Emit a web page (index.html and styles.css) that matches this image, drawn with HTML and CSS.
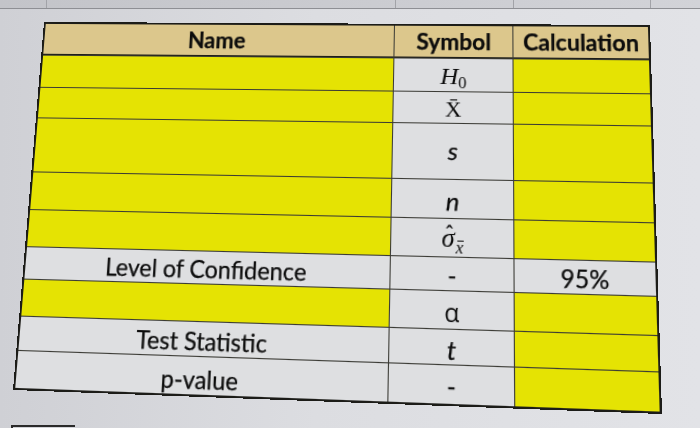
FILE: index.html
```html
<!DOCTYPE html>
<html lang="en">
<head>
<meta charset="utf-8">
<title>Hypothesis test table</title>
<link rel="stylesheet" href="styles.css">
</head>
<body>
<div class="sheet">
  <div class="cell head">Name</div>
  <div class="cell head">Symbol</div>
  <div class="cell head">Calculation</div>

  <div class="cell yellow"></div>
  <div class="cell sym"><span class="serif h0"><i>H</i><sub class="sub0">0</sub></span></div>
  <div class="cell yellow"></div>

  <div class="cell yellow"></div>
  <div class="cell sym"><span class="serif xbar">X&#772;</span></div>
  <div class="cell yellow"></div>

  <div class="cell yellow"></div>
  <div class="cell sym mid"><i class="ital">s</i></div>
  <div class="cell yellow"></div>

  <div class="cell yellow"></div>
  <div class="cell sym"><i class="ital">n</i></div>
  <div class="cell yellow"></div>

  <div class="cell yellow"></div>
  <div class="cell sym"><span class="serif sigma"><span class="hat">σ</span><sub class="subx"><span class="bar">x</span></sub></span></div>
  <div class="cell yellow"></div>

  <div class="cell">Level of Confidence</div>
  <div class="cell sym">-</div>
  <div class="cell">95%</div>

  <div class="cell yellow"></div>
  <div class="cell sym alpha">α</div>
  <div class="cell yellow"></div>

  <div class="cell">Test Statistic</div>
  <div class="cell sym"><i class="ital">t</i></div>
  <div class="cell yellow"></div>

  <div class="cell low">p-value</div>
  <div class="cell sym">-</div>
  <div class="cell yellow"></div>
</div>
</body>
</html>
```
FILE: styles.css
```css
html, body {
  margin: 0;
  padding: 0;
}

body {
  width: 700px;
  height: 428px;
  overflow: hidden;
  font-family: Lato, "Open Sans", "DejaVu Sans", sans-serif;
  color: #0c0c0c;
  background:
    linear-gradient(#2a2a2a, #2a2a2a) 11px 425px / 64px 2px no-repeat,
    linear-gradient(#2a2a2a, #2a2a2a) 11px 425px / 2px 10px no-repeat,
    linear-gradient(#8e8f94, #8e8f94) 0 8px / 100% 1px no-repeat,
    linear-gradient(90deg,
      transparent 46px, #a2a3a8 46px, #a2a3a8 47px, transparent 47px,
      transparent 395px, #a2a3a8 395px, #a2a3a8 396px, transparent 396px,
      transparent 513px, #a2a3a8 513px, #a2a3a8 514px, transparent 514px,
      transparent 650px, #a2a3a8 650px, #a2a3a8 651px, transparent 651px) 0 0 / 100% 8px no-repeat,
    linear-gradient(90deg, #c3c4c9, #d2d3d8) 0 0 / 100% 8px no-repeat,
    linear-gradient(90deg, #cfd0d5 0%, #dcdde1 45%, #e2e3e7 100%);
}

.sheet {
  width: 600px;
  height: 360px;
  box-sizing: border-box;
  display: grid;
  grid-template-columns: 356fr 115fr 129fr;
  grid-template-rows: 33fr 33fr 32fr 55fr 38fr 34fr 31fr 36fr 32fr 36fr;
  gap: 1px;
  background: #3a3a34;
  border: 2px solid #1c1c18;
  transform-origin: 0 0;
  transform: matrix3d(0.955883, 0.0029185, 0, -0.00008326,
                      -0.088469, 0.951447, 0, -0.00018148,
                      0, 0, 1, 0,
                      44, 22, 0, 1);
}

.cell {
  background: #dedfe1;
  display: flex;
  justify-content: center;
  align-items: center;
  padding-top: 5px;
  box-sizing: border-box;
  font-size: 22.5px;
  line-height: 1;
  white-space: nowrap;
  -webkit-text-stroke: 0.25px #0c0c0c;
}

.low {
  padding-top: 8px;
}

.head {
  background: #dcc78c;
  font-weight: 700;
  font-size: 22px;
  padding-top: 2px;
  border-bottom: 1px solid #1c1c18;
}

.yellow {
  background: #e5e303;
}

.sym {
  font-size: 22px;
}

.mid {
  padding-top: 0;
}

.serif {
  font-family: "Liberation Serif", "DejaVu Serif", serif;
  font-size: 24px;
  -webkit-text-stroke: 0;
}

.sub0 {
  font-style: normal;
  font-size: 16px;
  vertical-align: -4px;
}

.xbar {
  font-size: 22px;
}

.sigma {
  font-size: 25px;
}

.hat {
  position: relative;
  display: inline-block;
  font-style: italic;
}

.hat::before {
  content: "\02C6";
  position: absolute;
  left: 4px;
  top: -1px;
  font-size: 20px;
  font-weight: 700;
  font-style: normal;
}

.subx {
  font-size: 16px;
  font-style: italic;
  vertical-align: -6px;
  margin-left: 1px;
}

.bar {
  position: relative;
  display: inline-block;
}

.bar::before {
  content: "";
  position: absolute;
  left: 2px;
  right: 0;
  top: 1px;
  border-top: 1px solid #111111;
}

.ital {
  font-style: italic;
  font-size: 24px;
}

.alpha {
  font-family: "Open Sans", "DejaVu Sans", sans-serif;
  font-size: 23px;
  -webkit-text-stroke: 0;
}
```
